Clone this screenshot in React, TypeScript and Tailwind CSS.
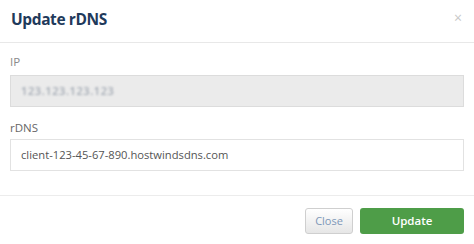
import React from 'react';

export default function App() {
    return (
        <div className="w-[474px] h-[244px] bg-white flex flex-col" style={{ fontFamily: '"Open Sans", "Liberation Sans", sans-serif' }}>
            {/* header */}
            <div className="h-[43px] flex items-center justify-between pl-[11px] pr-[12px] border-b border-[#e8e8e8]">
                <h3 className="text-[15.5px] font-bold text-[#1f3a5b] tracking-[-0.4px] leading-none mt-[-2px]">Update rDNS</h3>
                <span className="text-[14px] text-[#c8c8c8] leading-none mt-[-6px]">×</span>
            </div>

            {/* body */}
            <div className="px-[10px] pt-[11px] pb-[24px] border-b border-[#ececec] flex flex-col">
                <label className="text-[11.5px] text-[#8a8a8a] leading-[16px]">IP</label>
                <div className="mt-[5px] h-[32px] bg-[#ebebeb] border border-[#dcdcdc] flex items-center px-[10px]">
                    <span className="text-[11px] font-semibold text-[#a3aab4] blur-[1.2px] tracking-[0.6px] select-none">123.123.123.123</span>
                </div>
                <label className="mt-[13px] text-[11.5px] text-[#666] leading-[16px]">rDNS</label>
                <div className="mt-[3px] h-[32px] bg-white border border-[#e2e2e2] flex items-center px-[10px]">
                    <span className="text-[11.2px] text-[#555]">client-123-45-67-890.hostwindsdns.com</span>
                </div>
            </div>

            {/* footer */}
            <div className="flex justify-end gap-[7px] pr-[10px] pt-[12px]">
                <button className="w-[48px] h-[26px] rounded-[3px] border border-[#cfcfcf] bg-gradient-to-b from-white to-[#e6e6e6] text-[11px] text-[#7d97b8]">Close</button>
                <button className="w-[104px] h-[26px] rounded-[3px] bg-[#4e9d48] text-[11.5px] font-semibold text-white">Update</button>
            </div>
        </div>
    );
}
